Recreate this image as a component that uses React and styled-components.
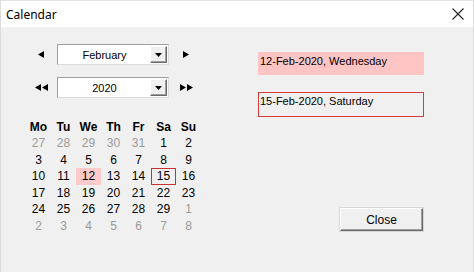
import React from 'react';
import styled, { createGlobalStyle } from 'styled-components';

const GlobalStyle = createGlobalStyle`
  html, body {
    margin: 0;
    padding: 0;
    background: #f0f0f0;
  }
`;

const Window = styled.div`
  width: 474px;
  height: 272px;
  display: flex;
  flex-direction: column;
  background: #f0f0f0;
  box-sizing: border-box;
  border-left: 1px solid #dcdcdc;
  border-right: 1px solid #dcdcdc;
  font-family: "Liberation Sans", Arial, sans-serif;
  color: #000;
  overflow: hidden;
`;

const TitleBar = styled.div`
  height: 27px;
  flex: none;
  background: #fff;
  border-top: 1px solid #e4e4e4;
  box-sizing: border-box;
  display: flex;
  align-items: center;
  justify-content: space-between;
  padding: 0 9px 0 5px;
`;

const Title = styled.span`
  font-family: "Noto Sans", "Open Sans", sans-serif;
  font-size: 12px;
  color: #000;
`;

const CloseX = styled.svg`
  width: 12px;
  height: 12px;
  display: block;
`;

const Body = styled.div`
  flex: 1;
  display: flex;
  align-items: flex-start;
  padding-left: 25px;
`;

const LeftColumn = styled.div`
  width: 175px;
  display: flex;
  flex-direction: column;
  padding-top: 17px;
`;

const NavRow = styled.div`
  display: flex;
  align-items: center;
  height: 21px;
  margin-bottom: ${({ $gap }) => $gap || 0}px;
`;

const ArrowButton = styled.div`
  width: ${({ $w }) => $w}px;
  display: flex;
  justify-content: center;
  align-items: center;
  margin-left: ${({ $ml }) => $ml || 0}px;
  margin-right: ${({ $mr }) => $mr || 0}px;
`;

const Combo = styled.div`
  width: 112px;
  height: 21px;
  box-sizing: border-box;
  background: #fff;
  border: 1px solid;
  border-color: #a0a0a0 #dcdcdc #dcdcdc #a0a0a0;
  display: flex;
  align-items: stretch;
`;

const ComboText = styled.div`
  flex: 1;
  display: flex;
  align-items: center;
  justify-content: center;
  font-size: 11px;
  padding-left: 2px;
`;

const DropButton = styled.div`
  width: 17px;
  margin: 1px;
  box-sizing: border-box;
  background: #f0f0f0;
  border: 1px solid;
  border-color: #fff #696969 #696969 #fff;
  box-shadow: inset -1px -1px #a0a0a0;
  display: flex;
  align-items: center;
  justify-content: center;
`;

const Grid = styled.div`
  display: grid;
  grid-template-columns: repeat(7, 25px);
  grid-template-rows: 17px repeat(6, 16.5px);
  margin-top: 20px;
`;

const HeadCell = styled.div`
  display: flex;
  align-items: center;
  justify-content: center;
  font-size: 12px;
  font-weight: bold;
`;

const DayCell = styled.div`
  display: flex;
  align-items: center;
  justify-content: center;
  font-size: 12px;
  box-sizing: border-box;
  color: ${({ $muted }) => ($muted ? '#9a9a9a' : '#000')};
  background: ${({ $picked }) => ($picked ? '#fccaca' : 'transparent')};
  border: 1px solid ${({ $today }) => ($today ? '#c83232' : 'transparent')};
`;

const RightColumn = styled.div`
  width: 166px;
  margin-left: 57px;
  padding-top: 25px;
  display: flex;
  flex-direction: column;
`;

const DateBox = styled.div`
  box-sizing: border-box;
  height: ${({ $h }) => $h}px;
  font-size: 11px;
  padding: 2px 1px;
  background: ${({ $fill }) => $fill || 'transparent'};
  border: 1px solid ${({ $line }) => $line || 'transparent'};
  margin-bottom: ${({ $gap }) => $gap || 0}px;
`;

const CloseButton = styled.div`
  align-self: flex-end;
  margin-right: 1px;
  margin-top: 91px;
  width: 83px;
  height: 23px;
  box-sizing: border-box;
  background: #f0f0f0;
  border: 1px solid;
  border-color: #fff #696969 #696969 #fff;
  box-shadow: inset -1px -1px #a0a0a0, 0 0 0 1px #d8d8d8;
  display: flex;
  align-items: center;
  justify-content: center;
  font-size: 12px;
`;

const Tri = ({ dir, double }) => {
  const one = dir === 'left' ? 'M6 0 L6 7 L0 3.5 Z' : 'M0 0 L0 7 L6 3.5 Z';
  const w = double ? 13 : 6;
  return (
    <svg width={w} height="7" viewBox={`0 0 ${w} 7`}>
      <path d={one} fill="#000" />
      {double && <path d={one} fill="#000" transform="translate(7 0)" />}
    </svg>
  );
};

const DownArrow = () => (
  <svg width="7" height="4" viewBox="0 0 7 4">
    <path d="M0 0 L7 0 L3.5 4 Z" fill="#000" />
  </svg>
);

const heads = ['Mo', 'Tu', 'We', 'Th', 'Fr', 'Sa', 'Su'];

const days = [
  ...[27, 28, 29, 30, 31].map((d) => ({ d, muted: true })),
  ...Array.from({ length: 29 }, (_, i) => ({ d: i + 1 })),
  ...[1, 2, 3, 4, 5, 6, 7, 8].map((d) => ({ d, muted: true })),
];

const App = () => {
  return (
    <Window>
      <GlobalStyle />
      <TitleBar>
        <Title>Calendar</Title>
        <CloseX viewBox="0 0 12 12">
          <path d="M0.5 0.5 L11.5 11.5 M11.5 0.5 L0.5 11.5" stroke="#222" strokeWidth="1.1" />
        </CloseX>
      </TitleBar>
      <Body>
        <LeftColumn>
          <NavRow $gap={12}>
            <ArrowButton $w={22} $ml={4} $mr={5}>
              <Tri dir="left" />
            </ArrowButton>
            <Combo>
              <ComboText>February</ComboText>
              <DropButton>
                <DownArrow />
              </DropButton>
            </Combo>
            <ArrowButton $w={22} $ml={6}>
              <Tri dir="right" />
            </ArrowButton>
          </NavRow>
          <NavRow>
            <ArrowButton $w={22} $ml={4} $mr={5}>
              <Tri dir="left" double />
            </ArrowButton>
            <Combo>
              <ComboText>2020</ComboText>
              <DropButton>
                <DownArrow />
              </DropButton>
            </Combo>
            <ArrowButton $w={22} $ml={6}>
              <Tri dir="right" double />
            </ArrowButton>
          </NavRow>
          <Grid>
            {heads.map((h) => (
              <HeadCell key={h}>{h}</HeadCell>
            ))}
            {days.map((x, i) => (
              <DayCell
                key={i}
                $muted={x.muted}
                $picked={!x.muted && x.d === 12}
                $today={!x.muted && x.d === 15}
              >
                {x.d}
              </DayCell>
            ))}
          </Grid>
        </LeftColumn>
        <RightColumn>
          <DateBox $h={23} $fill="#ffc4c4" $gap={17}>
            12-Feb-2020, Wednesday
          </DateBox>
          <DateBox $h={25} $line="#d23c3c">
            15-Feb-2020, Saturday
          </DateBox>
          <CloseButton>Close</CloseButton>
        </RightColumn>
      </Body>
    </Window>
  );
};

export default App;
